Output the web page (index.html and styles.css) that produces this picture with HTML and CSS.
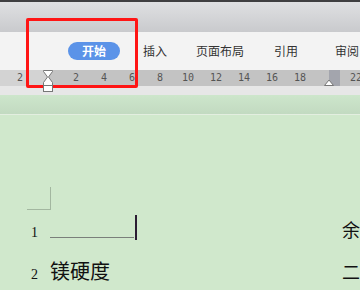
FILE: index.html
```html
<!DOCTYPE html>
<html lang="zh-CN">
<head>
  <meta charset="utf-8" />
  <meta name="viewport" content="width=device-width, initial-scale=1" />
  <title>文档</title>
  <link rel="stylesheet" href="styles.css">
</head>
<body>
  <div class="app">
    <div class="titlebar"></div>
    <div class="toolbar"></div>

    <nav class="tabs">
      <span class="tab active">开始</span>
      <span class="tab t-insert">插入</span>
      <span class="tab t-layout">页面布局</span>
      <span class="tab t-ref">引用</span>
      <span class="tab t-review">审阅</span>
    </nav>

    <div class="ruler">
      <span class="mark">2</span>
      <span class="mark indent">
        <svg width="10" height="22" viewBox="0 0 10 22">
          <path d="M0.5 0.5 H9.5 V1.5 L5.5 7 L9.5 12.5 V15.5 H0.5 V12.5 L4.5 7 L0.5 1.5 Z" fill="#fff" stroke="#777" stroke-width="1"/>
          <rect x="0.5" y="15.5" width="9" height="6" fill="#fff" stroke="#777" stroke-width="1"/>
        </svg>
      </span>
      <span class="mark">2</span>
      <span class="mark">4</span>
      <span class="mark">6</span>
      <span class="mark">8</span>
      <span class="mark">10</span>
      <span class="mark">12</span>
      <span class="mark">14</span>
      <span class="mark">16</span>
      <span class="mark">18</span>
      <span class="mark right-indent">
        <svg width="10" height="7" viewBox="0 0 10 7">
          <path d="M0.5 6.5 L5 1 L9.5 6.5 Z" fill="#fff" stroke="#777" stroke-width="1"/>
        </svg>
      </span>
      <span class="mark">22</span>
    </div>

    <div class="ruler-gap"></div>
    <div class="doc-top"></div>

    <div class="page">
      <div class="corner"></div>
      <div class="line">
        <span class="num">1</span>
        <span class="text"><span class="blank"></span><span class="cursor"></span></span>
        <span class="tail">余</span>
      </div>
      <div class="line">
        <span class="num">2</span>
        <span class="text">镁硬度</span>
        <span class="tail">二</span>
      </div>
    </div>

    <div class="highlight"></div>
  </div>
</body>
</html>
```

FILE: styles.css
```css
body { margin:0; background:#d0e8cc; font-family:"Noto Sans CJK SC", "Liberation Sans", sans-serif; }
.app { position:relative; width:360px; height:290px; overflow:hidden; }

.titlebar { height:2px; background:#3f3f41; }
.toolbar { height:30px; background:linear-gradient(#dfe0e2, #c9cacd); }

.tabs {
  height:38px; background:#f3f3f3;
  display:flex; align-items:center; padding-left:68px;
  font-size:12px; color:#333; white-space:nowrap;
}
.tab { line-height:18px; }
.tab.active {
  width:52px; height:18px; border-radius:9px;
  background:#5b93e8; color:#fff; text-align:center; font-weight:bold;
}
.t-insert { margin-left:23px; }
.t-layout { margin-left:29px; }
.t-ref { margin-left:30px; }
.t-review { margin-left:37px; }

.ruler {
  position:relative; height:16px; display:flex; padding-left:6px;
  background:linear-gradient(to right, #d3d3d3 0 48px, #c3c3c3 48px 329px, #a3a5ad 329px 340px, #c3c3c3 340px);
  font-family:"DejaVu Sans Mono", monospace; font-size:10px; color:#555;
}
.mark { position:relative; flex:0 0 28px; text-align:center; line-height:16px; }
.indent svg { position:absolute; left:9px; top:0; z-index:1; }
.right-indent svg { position:absolute; left:10px; top:9px; }

.ruler-gap { height:9px; background:#e7e7e7; }
.doc-top { height:19px; background:linear-gradient(#cde6cb, #c2dac1); border-bottom:1px solid #e3eee0; }

.page { padding-top:72px; }
.corner { width:23px; height:22px; margin-left:27px; border-right:1px solid #a3b7a0; border-bottom:1px solid #a3b7a0; }

.line { display:flex; align-items:flex-end; height:33px; color:#111; white-space:nowrap; }
.line + .line { height:42px; }
.num { width:50px; padding-left:31px; box-sizing:border-box; font-family:"Liberation Serif", serif; font-size:14px; line-height:20px; }
.text { display:flex; align-items:flex-end; font-size:20px; line-height:28px; }
.blank { width:84px; height:0; border-bottom:1px solid #7a7f7a; margin-bottom:5px; }
.cursor { width:2px; height:25px; background:#2b1d33; margin-left:1px; margin-bottom:3px; }
.tail { margin-left:auto; font-size:18px; line-height:28px; }

.highlight {
  position:absolute; left:26px; top:18px; width:112px; height:70px;
  box-sizing:border-box; border:3px solid #ff1515; border-radius:2px;
}
```
